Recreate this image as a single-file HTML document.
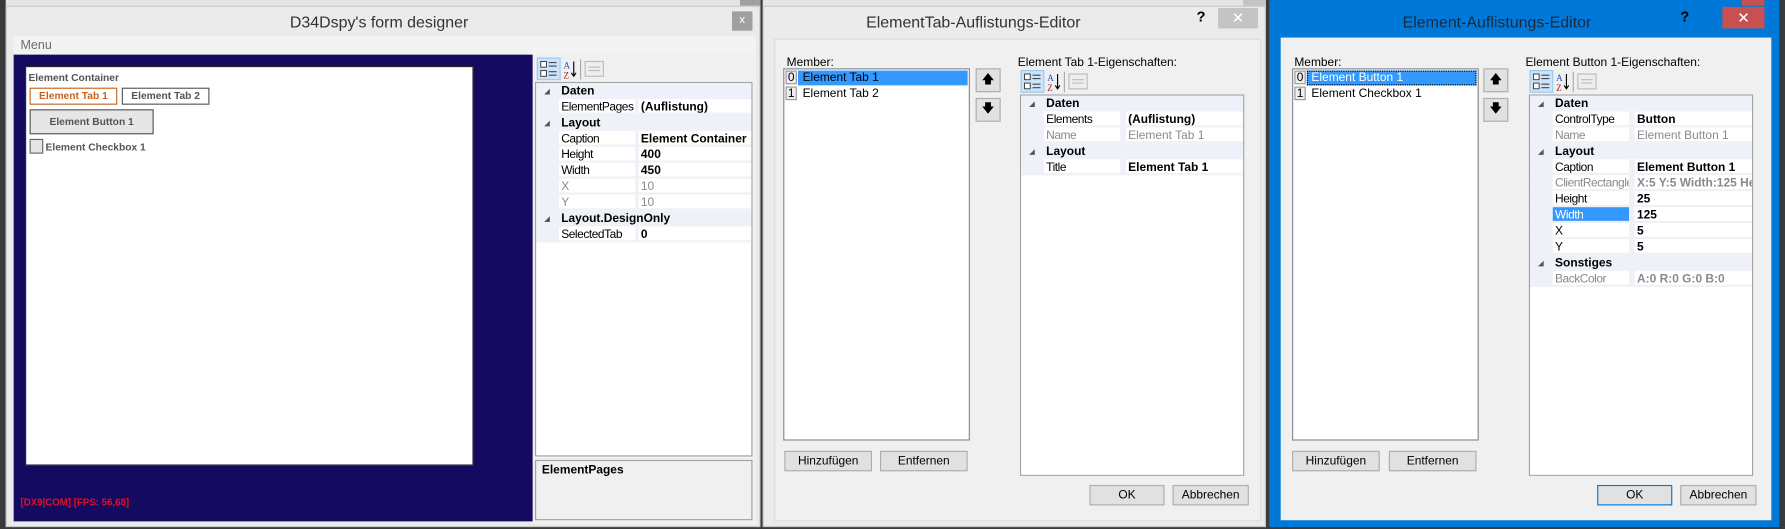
<!DOCTYPE html>
<html><head><meta charset="utf-8"><style>
*{margin:0;padding:0;box-sizing:border-box}
body{width:1785px;height:529px;overflow:hidden;background:#3a3a3a;font-family:"Liberation Sans",Arial,sans-serif;}
#s{position:absolute;left:0;top:0;width:1568px;height:465px;transform:scale(1.13839);transform-origin:0 0;}
.a{position:absolute}
.t{position:absolute;white-space:nowrap;font-size:10.5px;color:#000;line-height:14px}
.win{position:absolute;background:#ebebeb;border:1px solid #c8c8c8}
.ttl{position:absolute;font-size:14px;color:#333;white-space:nowrap;line-height:20px}
.grid{position:absolute;background:#fff;border:1px solid #a0a0a0;overflow:hidden}
.row{position:relative;height:14px;font-size:10.5px;line-height:14px;white-space:nowrap;background:#eef1f7}
.row .n{position:absolute;left:20px;width:67px;height:13px;background:#fff;padding-left:2px;border-bottom:1px solid #f0f0f0;overflow:hidden;letter-spacing:-0.4px}
.row .v{position:absolute;left:90px;right:0;height:13px;padding-left:2px;background:#fff;border-bottom:1px solid #f0f0f0;overflow:hidden}
.row.c{background:#eef1f7;font-weight:bold}
.row.c span{position:absolute;left:22px}
.row.c i{position:absolute;left:7px;top:5px;width:0;height:0;border-left:5px solid transparent;border-bottom:5px solid #555}
.g{color:#8a8a8a}
.b{font-weight:bold}
.btn{position:absolute;background:#e1e1e1;border:1px solid #adadad;font-size:10.5px;text-align:center;line-height:16px}
.list{position:absolute;background:#fff;border:1px solid #828790}
.idx{position:absolute;left:1px;width:10px;height:12px;border:1px solid #999;background:#eee;font-size:10.5px;line-height:11px;text-align:center}
.it{position:absolute;left:12px;height:13px;font-size:10.5px;line-height:13px;padding-left:4px;white-space:nowrap}
</style></head><body><div id="s">

<div class="a" style="left:5px;top:0;width:663px;height:6px;background:#e4e4e4"></div>
<div class="a" style="left:650px;top:0;width:18px;height:6px;background:#a0a0a0"></div>
<div class="a" style="left:670px;top:0;width:442px;height:6px;background:#e4e4e4"></div>
<div class="a" style="left:1092px;top:0;width:20px;height:6px;background:#c4c4c4"></div>
<div class="a" style="left:1115px;top:0;width:448px;height:6px;background:#0078d7"></div>
<div class="a" style="left:1530px;top:0;width:20px;height:6px;background:#c75050"></div>

<div class="win" style="left:5px;top:5px;width:663px;height:458px"></div>
<div class="ttl" style="left:5px;top:9px;width:656px;text-align:center">D34Dspy's form designer</div>
<div class="a" style="left:643px;top:10px;width:18px;height:17px;background:#a0a0a0;color:#fff;font-size:10px;text-align:center;line-height:16px">x</div>
<div class="a" style="left:12px;top:32px;width:652px;height:16px;background:#f3f3f3"></div>
<div class="t" style="left:18px;top:33px;font-size:11px;color:#6d6d6d">Menu</div>
<div class="a" style="left:12px;top:48px;width:456px;height:410px;background:#140a60"></div>
<div class="a" style="left:22px;top:58px;width:394px;height:351px;background:#fff;border:1px solid #222"></div>
<div class="t b" style="left:25px;top:61px;font-size:9px;color:#555">Element Container</div>
<div class="a" style="left:26px;top:77px;width:77px;height:15px;border:1px solid #c8641e;color:#c8641e;font-size:9px;font-weight:bold;text-align:center;line-height:13px">Element Tab 1</div>
<div class="a" style="left:107px;top:77px;width:77px;height:15px;border:1px solid #555;color:#555;font-size:9px;font-weight:bold;text-align:center;line-height:13px">Element Tab 2</div>
<div class="a" style="left:26px;top:96px;width:109px;height:22px;border:1px solid #555;background:#e6e6e6;color:#555;font-size:9px;font-weight:bold;text-align:center;line-height:20px">Element Button 1</div>
<div class="a" style="left:26px;top:122px;width:12px;height:13px;border:1px solid #666;background:#e6e6e6"></div>
<div class="t b" style="left:40px;top:122px;font-size:9px;color:#555">Element Checkbox 1</div>
<div class="t b" style="left:18px;top:434px;font-size:8.5px;color:#e0102a">[DX9|COM] [FPS: 56,68]</div>

<div class="a" style="left:468px;top:48px;width:196px;height:412px;background:#f0f0f0"></div>
<svg class="a" style="left:471px;top:50px" width="80" height="22">
 <rect x="1" y="1" width="20" height="19" fill="#cce4f7" stroke="#99c9ef"/>
 <rect x="4" y="4" width="5" height="5" fill="#fff" stroke="#333" stroke-width=".8"/><rect x="4" y="12" width="5" height="5" fill="#fff" stroke="#333" stroke-width=".8"/>
 <path d="M11 5h7M11 8h7M11 13h7M11 16h7" stroke="#445" stroke-width="1"/>
 <text x="24" y="10" font-size="8" fill="#2050c0" font-family="Liberation Serif">A</text><text x="24" y="19" font-size="8" fill="#a02020" font-family="Liberation Serif">Z</text>
 <path d="M33 4v13M31 14l2 3 2-3" stroke="#000" fill="none"/>
 <path d="M39 2v18" stroke="#aaa"/>
 <rect x="43" y="4" width="16" height="13" fill="#eee" stroke="#bbb"/><path d="M46 9h10M46 12h10" stroke="#bbb"/>
</svg>
<div class="grid" style="left:470px;top:72px;width:191px;height:329px">
 <div class="row c"><i></i><span>Daten</span></div>
 <div class="row"><div class="n">ElementPages</div><div class="v b">(Auflistung)</div></div>
 <div class="row c"><i></i><span>Layout</span></div>
 <div class="row"><div class="n">Caption</div><div class="v b">Element Container</div></div>
 <div class="row"><div class="n">Height</div><div class="v b">400</div></div>
 <div class="row"><div class="n">Width</div><div class="v b">450</div></div>
 <div class="row"><div class="n g">X</div><div class="v g">10</div></div>
 <div class="row"><div class="n g">Y</div><div class="v g">10</div></div>
 <div class="row c"><i></i><span>Layout.DesignOnly</span></div>
 <div class="row"><div class="n">SelectedTab</div><div class="v b">0</div></div>
</div>
<div class="a" style="left:470px;top:404px;width:191px;height:53px;border:1px solid #a0a0a0;background:#f0f0f0"></div>
<div class="t b" style="left:476px;top:406px">ElementPages</div>

<div class="win" style="left:670px;top:5px;width:442px;height:458px"></div>
<div class="ttl" style="left:670px;top:9px;width:370px;text-align:center">ElementTab-Auflistungs-Editor</div>
<div class="t b" style="left:1051px;top:8px;font-size:13px">?</div>
<div class="a" style="left:1070px;top:7px;width:35px;height:18px;background:#c4c4c4;color:#fff;font-size:13px;text-align:center;line-height:18px">✕</div>
<div class="a" style="left:680px;top:34px;width:428px;height:424px;background:#f0f0f0;border:1px solid #dcdcdc"></div>
<div class="t" style="left:691px;top:48px">Member:</div>
<div class="list" style="left:688px;top:60px;width:164px;height:327px">
 <div class="idx" style="top:1px">0</div><div class="it" style="top:1px;width:149px;background:#3399ff">Element Tab 1</div>
 <div class="idx" style="top:15px">1</div><div class="it" style="top:15px">Element Tab 2</div>
</div>
<div class="btn" style="left:857px;top:60px;width:22px;height:21px;line-height:19px;font-size:11px">🡅</div>
<div class="btn" style="left:857px;top:86px;width:22px;height:21px;line-height:19px;font-size:11px">🡇</div>
<div class="t" style="left:894px;top:48px">Element Tab 1-Eigenschaften:</div>
<svg class="a" style="left:896px;top:61px" width="80" height="22">
 <rect x="1" y="1" width="20" height="19" fill="#cce4f7" stroke="#99c9ef"/>
 <rect x="4" y="4" width="5" height="5" fill="#fff" stroke="#333" stroke-width=".8"/><rect x="4" y="12" width="5" height="5" fill="#fff" stroke="#333" stroke-width=".8"/>
 <path d="M11 5h7M11 8h7M11 13h7M11 16h7" stroke="#445" stroke-width="1"/>
 <text x="24" y="10" font-size="8" fill="#2050c0" font-family="Liberation Serif">A</text><text x="24" y="19" font-size="8" fill="#a02020" font-family="Liberation Serif">Z</text>
 <path d="M33 4v13M31 14l2 3 2-3" stroke="#000" fill="none"/>
 <path d="M39 2v18" stroke="#aaa"/>
 <rect x="43" y="4" width="16" height="13" fill="#eee" stroke="#bbb"/><path d="M46 9h10M46 12h10" stroke="#bbb"/>
</svg>
<div class="grid" style="left:896px;top:83px;width:197px;height:335px">
 <div class="row c"><i></i><span>Daten</span></div>
 <div class="row"><div class="n">Elements</div><div class="v b" style="left:92px">(Auflistung)</div></div>
 <div class="row"><div class="n g">Name</div><div class="v g" style="left:92px">Element Tab 1</div></div>
 <div class="row c"><i></i><span>Layout</span></div>
 <div class="row"><div class="n">Title</div><div class="v b" style="left:92px">Element Tab 1</div></div>
 <div style="background:#fff;height:300px"></div>
</div>
<div class="btn" style="left:689px;top:396px;width:77px;height:18px">Hinzufügen</div>
<div class="btn" style="left:773px;top:396px;width:77px;height:18px">Entfernen</div>
<div class="btn" style="left:957px;top:426px;width:66px;height:18px">OK</div>
<div class="btn" style="left:1030px;top:426px;width:67px;height:18px">Abbrechen</div>

<div class="a" style="left:1115px;top:5px;width:448px;height:458px;background:#0078d7"></div>
<div class="ttl" style="left:1115px;top:9px;width:400px;text-align:center;color:#1a2a40">Element-Auflistungs-Editor</div>
<div class="t b" style="left:1476px;top:8px;font-size:13px">?</div>
<div class="a" style="left:1513px;top:6px;width:37px;height:19px;background:#c75050;color:#fff;font-size:13px;text-align:center;line-height:19px">✕</div>
<div class="a" style="left:1125px;top:33px;width:431px;height:424px;background:#f0f0f0"></div>
<div class="t" style="left:1137px;top:48px">Member:</div>
<div class="list" style="left:1135px;top:60px;width:164px;height:327px">
 <div class="idx" style="top:1px">0</div><div class="it" style="top:1px;width:149px;background:#3399ff;color:#fff;outline:1px dotted #000;outline-offset:-1px">Element Button 1</div>
 <div class="idx" style="top:15px">1</div><div class="it" style="top:15px">Element Checkbox 1</div>
</div>
<div class="btn" style="left:1303px;top:60px;width:22px;height:21px;line-height:19px;font-size:11px">🡅</div>
<div class="btn" style="left:1303px;top:86px;width:22px;height:21px;line-height:19px;font-size:11px">🡇</div>
<div class="t" style="left:1340px;top:48px">Element Button 1-Eigenschaften:</div>
<svg class="a" style="left:1343px;top:61px" width="80" height="22">
 <rect x="1" y="1" width="20" height="19" fill="#cce4f7" stroke="#99c9ef"/>
 <rect x="4" y="4" width="5" height="5" fill="#fff" stroke="#333" stroke-width=".8"/><rect x="4" y="12" width="5" height="5" fill="#fff" stroke="#333" stroke-width=".8"/>
 <path d="M11 5h7M11 8h7M11 13h7M11 16h7" stroke="#445" stroke-width="1"/>
 <text x="24" y="10" font-size="8" fill="#2050c0" font-family="Liberation Serif">A</text><text x="24" y="19" font-size="8" fill="#a02020" font-family="Liberation Serif">Z</text>
 <path d="M33 4v13M31 14l2 3 2-3" stroke="#000" fill="none"/>
 <path d="M39 2v18" stroke="#aaa"/>
 <rect x="43" y="4" width="16" height="13" fill="#eee" stroke="#bbb"/><path d="M46 9h10M46 12h10" stroke="#bbb"/>
</svg>
<div class="grid" style="left:1343px;top:83px;width:197px;height:335px">
 <div class="row c"><i></i><span>Daten</span></div>
 <div class="row"><div class="n">ControlType</div><div class="v b" style="left:92px">Button</div></div>
 <div class="row"><div class="n g">Name</div><div class="v g" style="left:92px">Element Button 1</div></div>
 <div class="row c"><i></i><span>Layout</span></div>
 <div class="row"><div class="n">Caption</div><div class="v b" style="left:92px">Element Button 1</div></div>
 <div class="row"><div class="n g">ClientRectangle</div><div class="v b g" style="left:92px">X:5 Y:5 Width:125 Height:25</div></div>
 <div class="row"><div class="n">Height</div><div class="v b" style="left:92px">25</div></div>
 <div class="row"><div class="n" style="background:#3399ff;color:#fff">Width</div><div class="v b" style="left:92px">125</div></div>
 <div class="row"><div class="n">X</div><div class="v b" style="left:92px">5</div></div>
 <div class="row"><div class="n">Y</div><div class="v b" style="left:92px">5</div></div>
 <div class="row c"><i></i><span>Sonstiges</span></div>
 <div class="row"><div class="n g">BackColor</div><div class="v b g" style="left:92px">A:0 R:0 G:0 B:0</div></div>
 <div style="background:#fff;height:200px"></div>
</div>
<div class="btn" style="left:1135px;top:396px;width:77px;height:18px">Hinzufügen</div>
<div class="btn" style="left:1220px;top:396px;width:77px;height:18px">Entfernen</div>
<div class="btn" style="left:1403px;top:426px;width:66px;height:18px;border-color:#0078d7">OK</div>
<div class="btn" style="left:1476px;top:426px;width:67px;height:18px">Abbrechen</div>

</div></body></html>
